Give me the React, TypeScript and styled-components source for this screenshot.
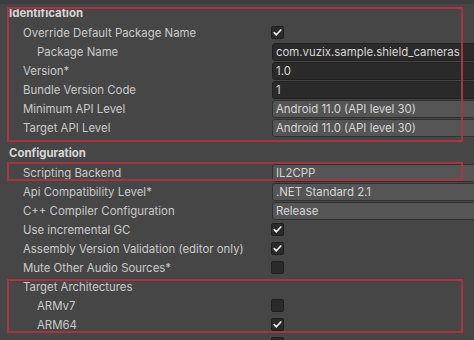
import styled, { createGlobalStyle } from 'styled-components';

const GlobalStyle = createGlobalStyle`
  html, body {
    margin: 0;
    padding: 0;
    background: #464646;
    overflow: hidden;
  }
  body {
    font-family: Inter, "Noto Sans", sans-serif;
    font-size: 11.4px;
  }
`;

const Inspector = styled.div`
  width: 500px;
  border-top: 4px solid #3d3d3d;
`;

const Group = styled.div<{ $top: number; $bottom: number }>`
  position: relative;

  &::after {
    content: '';
    position: absolute;
    left: 7px;
    right: 37px;
    top: ${({ $top }) => $top}px;
    bottom: ${({ $bottom }) => $bottom}px;
    border: 2px solid #a83442;
    pointer-events: none;
  }
`;

const SectionHeader = styled.div`
  height: 19px;
  line-height: 19px;
  padding-left: 9px;
  font-weight: 700;
  color: #d6d6d6;
`;

const Spacer = styled.div`
  height: 7px;
`;

const Row = styled.div`
  display: grid;
  grid-template-columns: 271px 1fr;
  height: 19px;
  align-items: center;
`;

const Label = styled.div<{ $indent?: number }>`
  padding-left: ${({ $indent = 0 }) => 23 + $indent * 14}px;
  color: #cacaca;
  white-space: nowrap;
  overflow: hidden;
`;

const Field = styled.div<{ $dropdown?: boolean }>`
  align-self: end;
  box-sizing: border-box;
  height: 18px;
  margin-left: 1px;
  padding: 0 3px;
  line-height: 16px;
  border-radius: 3px;
  border: 1px solid ${({ $dropdown }) => ($dropdown ? '#313131' : '#212121')};
  background: ${({ $dropdown }) => ($dropdown ? '#555555' : '#2a2a2a')};
  color: #d6d6d6;
  white-space: nowrap;
`;

const Box = styled.div`
  box-sizing: border-box;
  width: 13px;
  height: 13px;
  border-radius: 2px;
  background: #2a2a2a;
  border: 1px solid #1f1f1f;
  display: flex;
  align-items: center;
  justify-content: center;
`;

function Check({ on }: { on?: boolean }) {
  return (
    <Box>
      {on && (
        <svg width="11" height="11" viewBox="0 0 11 11">
          <path d="M2.2 5.6 L4.4 7.8 L8.8 3" fill="none" stroke="#ececec" strokeWidth="1.7" strokeLinecap="round" strokeLinejoin="round" />
        </svg>
      )}
    </Box>
  );
}

type Item =
  | { label: string; indent?: number; kind: 'check'; on?: boolean }
  | { label: string; indent?: number; kind: 'text' | 'dropdown'; value: string }
  | { label: string; indent?: number; kind: 'none' };

function PropRow({ item }: { item: Item }) {
  return (
    <Row>
      <Label $indent={item.indent}>{item.label}</Label>
      {item.kind === 'check' && <Check on={item.on} />}
      {item.kind === 'text' && <Field>{item.value}</Field>}
      {item.kind === 'dropdown' && <Field $dropdown>{item.value}</Field>}
      {item.kind === 'none' && <span />}
    </Row>
  );
}

const IDENTIFICATION: Item[] = [
  { label: 'Override Default Package Name', kind: 'check', on: true },
  { label: 'Package Name', indent: 1, kind: 'text', value: 'com.vuzix.sample.shield_cameras' },
  { label: 'Version*', kind: 'text', value: '1.0' },
  { label: 'Bundle Version Code', kind: 'text', value: '1' },
  { label: 'Minimum API Level', kind: 'dropdown', value: 'Android 11.0 (API level 30)' },
  { label: 'Target API Level', kind: 'dropdown', value: 'Android 11.0 (API level 30)' },
];

const CONFIG: Item[] = [
  { label: 'Api Compatibility Level*', kind: 'dropdown', value: '.NET Standard 2.1' },
  { label: 'C++ Compiler Configuration', kind: 'dropdown', value: 'Release' },
  { label: 'Use incremental GC', kind: 'check', on: true },
  { label: 'Assembly Version Validation (editor only)', kind: 'check', on: true },
  { label: 'Mute Other Audio Sources*', kind: 'check' },
];

const ARCHITECTURES: Item[] = [
  { label: 'Target Architectures', kind: 'none' },
  { label: 'ARMv7', indent: 1, kind: 'check' },
  { label: 'ARM64', indent: 1, kind: 'check', on: true },
];

export default function App() {
  return (
    <>
      <GlobalStyle />
      <Inspector>
        <Group $top={3} $bottom={-5}>
          <SectionHeader>Identification</SectionHeader>
          {IDENTIFICATION.map((item) => (
            <PropRow key={item.label} item={item} />
          ))}
        </Group>
        <Spacer />
        <SectionHeader>Configuration</SectionHeader>
        <Group $top={-1} $bottom={1}>
          <PropRow item={{ label: 'Scripting Backend', kind: 'dropdown', value: 'IL2CPP' }} />
        </Group>
        {CONFIG.map((item) => (
          <PropRow key={item.label} item={item} />
        ))}
        <Group $top={2} $bottom={1}>
          {ARCHITECTURES.map((item) => (
            <PropRow key={item.label} item={item} />
          ))}
        </Group>
        <PropRow item={{ label: '', indent: 1, kind: 'check' }} />
      </Inspector>
    </>
  );
}
